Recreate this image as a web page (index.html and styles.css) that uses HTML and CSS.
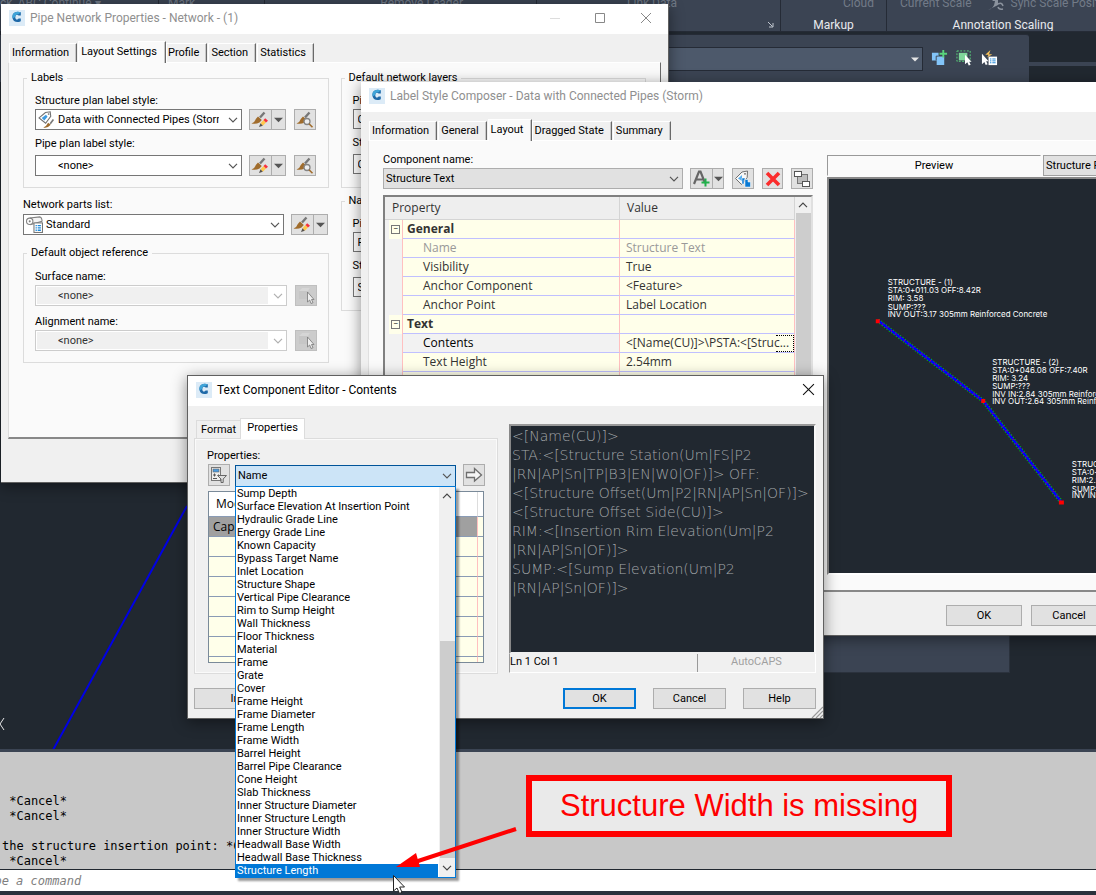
FILE: index.html
```html
<!DOCTYPE html>
<html lang="en">
<head>
<meta charset="utf-8">
<title>Text Component Editor - Contents</title>
<link rel="stylesheet" href="styles.css">
</head>
<body>
<svg class="defs" aria-hidden="true">
  <symbol id="i-logo" viewBox="0 0 16 16"><rect width="16" height="16" fill="#dcebf7"/><path d="M11.800 2.200V5.400H9.600Q7.600 4 6.400 5.800Q5.800 8 7.200 9.400Q8.800 10 9.600 8.600H11.800V11.200Q8 13 5 11Q2.600 8 3.800 4.600Q6 .6 11.800 2.200Z" fill="#1f69a8"/><path d="M11.800 2.200Q6 .6 3.800 4.600Q3.200 6.600 3.600 8.400L6.200 7Q6.200 4 9.600 4.200Z" fill="#3fa4d8"/></symbol>
  <symbol id="i-chev" viewBox="0 0 10 6"><path d="M1 .8 5 4.800 9 .8" fill="none" stroke="currentColor" stroke-width="1.200"/></symbol>
  <symbol id="i-tri" viewBox="0 0 10 6"><path d="M0 .5H10L5 5.500Z" fill="currentColor"/></symbol>
  <symbol id="i-brush" viewBox="0 0 18 18"><path d="M13.500 1.500 9 6.500" stroke="#777" stroke-width="2.400"/><path d="M7 5.500 10.800 9 8.500 11.500Q5 13.500.5 12.500Q4 11 4.800 8Z" fill="#a06c2c"/></symbol>
  <symbol id="i-edit" viewBox="0 0 18 18"><use href="#i-brush"/><path d="M9.500 12.200 12.500 9 15 11.500 11.800 14.700Z" fill="#ffc84c"/><path d="M12.500 9 14.200 7.200 17 9.700 15 11.500Z" fill="#f6303e"/><path d="M9.500 12.200 11.800 14.700 8 16Z" fill="#55514d"/></symbol>
  <symbol id="i-find" viewBox="0 0 18 18"><use href="#i-brush"/><circle cx="11" cy="10.500" r="3" fill="#eee" stroke="#858585" stroke-width="1.300"/><path d="M13 12.800 16.500 16.300" stroke="#a06c2c" stroke-width="1.600"/></symbol>
  <symbol id="i-tag" viewBox="0 0 16 16"><path d="M1 6.500 7 1.500 11.500.8 12 5 7.200 11.500Z" fill="#fff" stroke="#707070"/><path d="M3.500 6.500 7.500 3.500 9 5.500 6 9Z" fill="#3f9be0"/><circle cx="10" cy="2.800" r=".8" fill="#707070"/><path d="M14.500 8 11.500 12" stroke="#777" stroke-width="1.600"/><path d="M9.500 11 12 13Q9 16.500 5 15.500Q8 14.500 9.500 11Z" fill="#a06c2c"/></symbol>
  <symbol id="i-parts" viewBox="0 0 16 16"><path d="M3.500 1.800 13 .8Q15.500 2 15 5L4 8.200" fill="#f4f4f4" stroke="#808080"/><circle cx="3.500" cy="5" r="3" fill="#fff" stroke="#808080"/><circle cx="3.500" cy="5" r="1" fill="#808080"/><rect x="7.500" y="6.500" width="8" height="9" fill="#fff" stroke="#777"/><path d="M9 9H10.200M11 9H14M9 11.200H10.200M11 11.200H14M9 13.400H10.200M11 13.400H14" stroke="#1985d8" stroke-width="1.200"/></symbol>
  <symbol id="i-pick" viewBox="0 0 18 18"><path d="M2 4 5 1H13L11 4V12H2Z" fill="#c6c6c6"/><path d="M2 4 5 1H13L11 4Z" fill="#d6d6d6"/><path d="M10.500 5V15L12.700 13 14 16.500 16 15.700 14.500 12.500H17Z" fill="#eee" stroke="#777" stroke-width=".8"/></symbol>
  <symbol id="i-addtext" viewBox="0 0 18 18"><path d="M1 14 6 1.500H7.500L12 13M3 9.500H10" fill="none" stroke="#666" stroke-width="2.200"/><path d="M12.500 8.500V16.500M8.500 12.500H16.500" stroke="#21b04b" stroke-width="2"/></symbol>
  <symbol id="i-copytag" viewBox="0 0 18 18"><path d="M1.500 8.500 8 2 13.500 1 13.200 7.500 7.500 14.500Z" fill="#f7f7f7" stroke="#707070"/><path d="M4 8.500 8 5V11Z" fill="#58aff0"/><circle cx="11" cy="3.800" r=".9" fill="#666"/><path d="M8 8H11V10H10V14H8ZM11 9.500H14V12H16.500V17H11Z" fill="#0a7ad4" stroke="#fff" stroke-width=".5"/></symbol>
  <symbol id="i-del" viewBox="0 0 18 18"><path d="M3 3 15 15M15 3 3 15" stroke="#fb2c2c" stroke-width="3.600"/></symbol>
  <symbol id="i-order" viewBox="0 0 18 18"><rect x="4.500" y="4.500" width="10" height="9" fill="#bdbdbd" stroke="#777"/><rect x="1.500" y="1.500" width="7" height="5" fill="#fff" stroke="#555"/><rect x="9.500" y="11.500" width="7" height="5" fill="#fff" stroke="#555"/></symbol>
  <symbol id="i-filter" viewBox="0 0 18 18"><rect x="1.500" y="1.500" width="9" height="13" fill="#eee" stroke="#777"/><rect x="3" y="3" width="6" height="3" fill="#4b9ce0" stroke="#666" stroke-width=".6"/><path d="M3 9H6M4.500 7.500V10.500M3 12.500H7M8 9H9" stroke="#555"/><path d="M7.500 9.500H16.500L13.200 13V16.500H11V13Z" fill="#ddd" stroke="#666"/></symbol>
  <symbol id="i-arrow" viewBox="0 0 18 18"><path d="M1.500 6.500H9.500V2.500L16.500 9 9.500 15V11.500H1.500Z" fill="#f5f5f5" stroke="#6e6e6e" stroke-width="1.300"/></symbol>
  <symbol id="i-addsel" viewBox="0 0 18 18"><path d="M1 3H8V7H14V16H6V11H1Z" fill="#82c4f8"/><path d="M5.500 11V6.500H8" fill="none" stroke="#3b4453"/><path d="M13 0V8M9 4H17" stroke="#59d47c" stroke-width="2"/></symbol>
  <symbol id="i-selobj" viewBox="0 0 18 18"><rect x="3" y="3" width="9" height="8" fill="#7fd79a"/><path d="M1 1H15V12H1Z" fill="none" stroke="#59d47c" stroke-dasharray="2 1.500"/><path d="M9.500 5V15L12 13 13.500 16.500 15.500 15.700 14 12.500H16.500Z" fill="#fff"/></symbol>
  <symbol id="i-quick" viewBox="0 0 18 18"><path d="M1 4V15L3.600 12.800 5 16 7 15 5.500 12H8Z" fill="#fff"/><path d="M10 0 4.500 5H8L6.500 8 12 4.500H8.500Z" fill="#f7c25c"/><rect x="8" y="7" width="9" height="9" fill="#fff"/><path d="M9.500 9.500H11M12 9.500H15.500M9.500 11.500H11M12 11.500H15.500M9.500 13.500H11M12 13.500H15.500" stroke="#1985d8"/></symbol>
</svg>

<main class="desktop">
  <header class="ribbon">
    <div class="panel p1"><span class="cmd">ck, ABC Continue ▾</span></div>
    <div class="panel p2"><span class="cmd">Mark</span></div>
    <div class="panel p3"><span class="cmd">Remove Leader</span></div>
    <div class="panel p4"><span class="cmd">Link Data</span><svg class="launch" viewBox="0 0 6 6"><path d="M0 0 4.500 4.500M5 1V5H1" fill="none" stroke="#c0c6cf"/></svg></div>
    <div class="panel p5"><span class="cmd">Cloud</span><b>Markup</b></div>
    <div class="panel p6"><span class="cmd"><span>Current Scale</span><svg viewBox="0 0 16 16"><path d="M0 15Q6 14 7 6H4L10 1V10Z" fill="#8a929d"/><path d="M10 9Q14 7 15 11M15 14Q11 15 10 12" fill="none" stroke="#8a929d" stroke-width="1.500"/></svg><span>Sync Scale Positions</span></span><b>Annotation Scaling</b></div>
  </header>
  <div class="palette">
    <div class="palbox">
      <button class="palfield" aria-label="Object type"><svg class="tri"><use href="#i-tri"/></svg></button>
      <svg class="pi"><use href="#i-addsel"/></svg><svg class="pi"><use href="#i-selobj"/></svg><svg class="pi"><use href="#i-quick"/></svg>
    </div>
    <div class="rail"></div>
  </div>
  <div class="canvas">
    <svg class="drawing" viewBox="0 0 240 280"><path d="M187 37 53 281" stroke="#0000e6" stroke-width="2"/><path d="M-4 249 4 261M4 249-4 261" stroke="#e6e6e6"/></svg>
    <div class="strip"></div>
  </div>
  <section class="console">
    <pre>
 *Cancel*
 *Cancel*

the structure insertion point: *Cancel*
 *Cancel*</pre>
  </section>
  <div class="prompt"><input aria-label="Command line" placeholder="Type a command"></div>
  <div class="foot"></div>

  <section class="win w1">
    <div class="title"><svg class="logo"><use href="#i-logo"/></svg><h2>Pipe Network Properties - Network - (1)</h2>
      <svg class="sys" viewBox="0 0 104 12"><path d="M1 6.500H11" stroke="#ddd"/><path d="M46.500 1.500H55.500V10.500H46.500ZM92 1 102 11M102 1 92 11" fill="none" stroke="#888"/></svg></div>
    <nav class="tabs"><button>Information</button><button class="on">Layout Settings</button><button>Profile</button><button>Section</button><button>Statistics</button></nav>
    <div class="page cols">
      <div class="col">
        <fieldset><legend>Labels</legend>
          <label for="s1">Structure plan label style:</label>
          <div class="row"><span class="sel icon"><svg class="lead"><use href="#i-tag"/></svg><select id="s1"><option>Data with Connected Pipes (Storm)</option></select><svg class="chev"><use href="#i-chev"/></svg></span>
            <span class="split"><button aria-label="Edit style"><svg><use href="#i-edit"/></svg></button><button class="dd" aria-label="More"><svg><use href="#i-tri"/></svg></button></span><button class="ib" aria-label="Find"><svg><use href="#i-find"/></svg></button></div>
          <label for="s2" class="up">Pipe plan label style:</label>
          <div class="row"><span class="sel icon"><select id="s2"><option>&lt;none&gt;</option></select><svg class="chev"><use href="#i-chev"/></svg></span>
            <span class="split"><button aria-label="Edit style"><svg><use href="#i-edit"/></svg></button><button class="dd" aria-label="More"><svg><use href="#i-tri"/></svg></button></span><button class="ib" aria-label="Find"><svg><use href="#i-find"/></svg></button></div>
        </fieldset>
        <label for="s3" class="parts">Network parts list:</label>
        <div class="row"><span class="sel part"><svg class="lead"><use href="#i-parts"/></svg><select id="s3"><option>Standard</option></select><svg class="chev"><use href="#i-chev"/></svg></span>
          <span class="split"><button aria-label="Edit list"><svg><use href="#i-edit"/></svg></button><button class="dd" aria-label="More"><svg><use href="#i-tri"/></svg></button></span></div>
        <fieldset class="ref"><legend>Default object reference</legend>
          <label for="s4">Surface name:</label>
          <div class="row"><span class="sel icon off"><select id="s4" disabled><option>&lt;none&gt;</option></select><svg class="chev"><use href="#i-chev"/></svg></span><button class="ib off" disabled aria-label="Pick surface"><svg><use href="#i-pick"/></svg></button></div>
          <label for="s5" class="up">Alignment name:</label>
          <div class="row"><span class="sel icon off"><select id="s5" disabled><option>&lt;none&gt;</option></select><svg class="chev"><use href="#i-chev"/></svg></span><button class="ib off" disabled aria-label="Pick alignment"><svg><use href="#i-pick"/></svg></button></div>
        </fieldset>
      </div>
      <div class="col">
        <fieldset><legend>Default network layers</legend>
          <label for="l1">Pipe plan layer:</label><input id="l1" value="C-STRM-PIPE">
          <label for="l2" class="up">Structure plan layer:</label><input id="l2" value="C-STRM-STRC">
        </fieldset>
        <fieldset class="names"><legend>Name templates</legend>
          <label for="l3">Pipe name template:</label><input id="l3" value="Pipe - (1)">
          <label for="l4" class="up">Structure name template:</label><input id="l4" value="Structure - (1)">
        </fieldset>
      </div>
    </div>
  </section>

  <section class="win w2">
    <div class="title"><svg class="logo"><use href="#i-logo"/></svg><h2>Label Style Composer - Data with Connected Pipes (Storm)</h2></div>
    <nav class="tabs"><button>Information</button><button>General</button><button class="on">Layout</button><button>Dragged State</button><button>Summary</button></nav>
    <div class="page cols">
      <div class="compose">
        <label for="s6">Component name:</label>
        <div class="row"><span class="sel grey"><select id="s6"><option>Structure Text</option></select><svg class="chev"><use href="#i-chev"/></svg></span>
          <span class="split"><button aria-label="Add text"><svg><use href="#i-addtext"/></svg></button><button class="dd thin" aria-label="More"><svg><use href="#i-tri"/></svg></button></span>
          <button class="ib" aria-label="Copy component"><svg><use href="#i-copytag"/></svg></button><button class="ib" aria-label="Delete component"><svg><use href="#i-del"/></svg></button><button class="ib" aria-label="Draw order"><svg><use href="#i-order"/></svg></button></div>
        <div class="grid">
          <table>
            <colgroup><col class="c1"><col class="c2"><col></colgroup>
            <thead><tr><th colspan="2">Property</th><th>Value</th></tr></thead>
            <tbody>
              <tr class="grp"><td class="gut"><i>−</i></td><td>General</td><td></td></tr>
              <tr class="dim"><td class="gut"></td><td>Name</td><td>Structure Text</td></tr>
              <tr><td class="gut"></td><td>Visibility</td><td>True</td></tr>
              <tr><td class="gut"></td><td>Anchor Component</td><td>&lt;Feature&gt;</td></tr>
              <tr><td class="gut"></td><td>Anchor Point</td><td>Label Location</td></tr>
              <tr class="grp"><td class="gut"><i>−</i></td><td>Text</td><td></td></tr>
              <tr class="cur"><td class="gut"></td><td>Contents</td><td>&lt;[Name(CU)]&gt;\PSTA:&lt;[Struc...<button aria-label="Edit contents"></button></td></tr>
              <tr><td class="gut"></td><td>Text Height</td><td>2.54mm</td></tr>
              <tr><td class="gut"></td><td></td><td></td></tr>
            </tbody>
          </table>
          <div class="sbar"><svg><use href="#i-chev"/></svg><div></div></div>
        </div>
      </div>
      <div class="prev">
        <div class="ptabs"><button class="on">Preview</button><button>Structure Plan</button></div>
        <svg class="view" viewBox="1 1 420 396" preserveAspectRatio="xMinYMin slice">
          <g fill="none"><path d="M50 143 156 224 234 325" stroke="#0c0" stroke-width="4" stroke-dasharray="1.500 1.500"/><path d="M50 143 156 224 234 325" stroke="#00f" stroke-width="2.500"/><path d="M50 143 156 224 234 325" stroke="#d01030" stroke-dasharray="1.500 4"/></g>
          <path d="M48 142H52V146H48ZM154 222H158V226H154ZM232 324H237V328H232Z" fill="red"/>
          <text x="60" y="108">STRUCTURE - (1)</text><text x="60" y="116">STA:0+011.03 OFF:8.42R</text><text x="60" y="124">RIM: 3.58</text><text x="60" y="133">SUMP:???</text><text x="60" y="140">INV OUT:3.17 305mm Reinforced Concrete</text>
          <text x="165" y="188">STRUCTURE - (2)</text><text x="165" y="196">STA:0+046.08 OFF:7.40R</text><text x="165" y="204">RIM: 3.24</text><text x="165" y="212">SUMP:???</text><text x="165" y="220">INV IN:2.84 305mm Reinforced Concrete</text><text x="165" y="227">INV OUT:2.64 305mm Reinforced Concrete</text>
          <text x="245" y="290">STRUCTURE - (3)</text><text x="245" y="298">STA:0+082.25</text><text x="245" y="306">RIM:2.91</text><text x="245" y="315">SUMP:???</text><text x="245" y="322">INV IN:2.50</text>
        </svg>
      </div>
    </div>
    <div class="acts"><button>OK</button><button>Cancel</button></div>
  </section>

  <section class="win w3">
    <div class="title"><svg class="logo"><use href="#i-logo"/></svg><h2>Text Component Editor - Contents</h2><svg class="sys" viewBox="0 0 12 12"><path d="M1 1 11 11M11 1 1 11" stroke="#111" stroke-width="1"/></svg></div>
    <div class="body3">
      <div class="left3">
        <nav class="tabs flat"><button>Format</button><button class="on">Properties</button></nav>
        <div class="page3">
          <label for="s7">Properties:</label>
          <div class="row"><button class="ib" aria-label="Filter"><svg><use href="#i-filter"/></svg></button>
            <span class="sel open"><select id="s7"><option>Name</option></select><svg class="chev"><use href="#i-chev"/></svg>
              <span class="pop"><ul role="listbox" aria-label="Properties">
                <li>Sump Depth</li><li>Surface Elevation At Insertion Point</li><li>Hydraulic Grade Line</li><li>Energy Grade Line</li><li>Known Capacity</li><li>Bypass Target Name</li><li>Inlet Location</li><li>Structure Shape</li><li>Vertical Pipe Clearance</li><li>Rim to Sump Height</li><li>Wall Thickness</li><li>Floor Thickness</li><li>Material</li><li>Frame</li><li>Grate</li><li>Cover</li><li>Frame Height</li><li>Frame Diameter</li><li>Frame Length</li><li>Frame Width</li><li>Barrel Height</li><li>Barrel Pipe Clearance</li><li>Cone Height</li><li>Slab Thickness</li><li>Inner Structure Diameter</li><li>Inner Structure Length</li><li>Inner Structure Width</li><li>Headwall Base Width</li><li>Headwall Base Thickness</li><li class="hot">Structure Length</li></ul>
                <span class="psb"><svg class="u"><use href="#i-chev"/></svg><i></i><svg><use href="#i-chev"/></svg></span></span>
            </span>
            <button class="ib" aria-label="Insert property"><svg><use href="#i-arrow"/></svg></button></div>
          <table class="mods"><thead><tr><th>Modifier</th><th></th></tr></thead><tbody><tr class="hl"><td>Capitalization</td><td></td></tr><tr><td></td><td></td></tr><tr><td></td><td></td></tr><tr><td></td><td></td></tr><tr><td></td><td></td></tr><tr><td></td><td></td></tr><tr><td></td><td></td></tr><tr class="last"><td></td><td></td></tr></tbody></table>
        </div>
      </div>
      <div class="right3">
        <textarea aria-label="Contents" spellcheck="false">&lt;[Name(CU)]&gt;
STA:&lt;[Structure Station(Um|FS|P2
|RN|AP|Sn|TP|B3|EN|W0|OF)]&gt; OFF:
&lt;[Structure Offset(Um|P2|RN|AP|Sn|OF)]&gt;
&lt;[Structure Offset Side(CU)]&gt;
RIM:&lt;[Insertion Rim Elevation(Um|P2
|RN|AP|Sn|OF)]&gt;
SUMP:&lt;[Sump Elevation(Um|P2
|RN|AP|Sn|OF)]&gt;</textarea>
        <div class="status"><span>Ln 1 Col 1</span><span class="caps">AutoCAPS</span></div>
      </div>
    </div>
    <div class="acts3"><button class="ins">Insert...</button><button class="def">OK</button><button>Cancel</button><button>Help</button></div>
    <svg class="grip" viewBox="0 0 12 12"><path d="M1 12 12 1M5 12 12 5M9 12 12 9" stroke="#999" stroke-width="1.200"/></svg>
  </section>

  <aside class="note">Structure Width is missing</aside>
  <svg class="ptr" viewBox="0 0 130 71"><path d="M126 5 25 38" stroke="red" stroke-width="4"/><path d="M6 43 26 29 30 43Z" fill="red"/><path d="M3.500 51.500V67L7 64 9.500 69.500 12 68.300 9.700 63H14.500Z" fill="#fff" stroke="#222"/></svg>
</main>
</body>
</html>
```
FILE: styles.css
```css
* { box-sizing: border-box; }
body { margin: 0; font: 11px/16px Roboto, sans-serif; color: #000; }
button, input, select, textarea { font: inherit; color: inherit; border-radius: 0; margin: 0; }
button { padding: 0; border: 1px solid #adadad; background: #e1e1e1; }
h2 { margin: 0; font-size: 12px; font-weight: 400; }
label { display: block; }
.defs { position: absolute; width: 0; height: 0; }

.desktop { position: relative; overflow: hidden; display: flex; flex-direction: column; height: 100vh; background: #212830; }

.ribbon { display: flex; flex: none; height: 32px; background: #3b4453; border-bottom: 1px solid #252b36; overflow: hidden; font-size: 12px; color: #e8eaee; }
.panel { position: relative; flex: none; display: flex; flex-direction: column; align-items: center; justify-content: space-between; border-right: 1px solid #252b36; }
.panel b { font-weight: 400; line-height: 11px; }
.cmd { display: flex; gap: 7px; align-items: center; margin-top: -5px; color: #727b88; white-space: nowrap; }
.cmd svg { width: 16px; height: 16px; margin-left: 9px; }
.p1 { width: 159px; } .p2 { width: 106px; } .p3 { width: 272px; } .p4 { width: 244px; } .p5 { width: 106px; } .p6 { width: 233px; }
.p1 .cmd { align-self: flex-start; }
.p2 .cmd { align-self: flex-start; margin-left: 9px; }
.p3 .cmd { align-self: flex-end; margin-right: 73px; }
.p4 .cmd { align-self: flex-start; margin-left: 90px; }
.p5 .cmd { align-self: flex-end; margin-right: 12px; }
.p6 .cmd { align-self: flex-start; margin-left: 13px; }
.launch { position: absolute; right: 6px; bottom: 3px; width: 6px; height: 6px; }

.palette { display: flex; flex: none; height: 50px; }
.palbox { flex: none; display: flex; align-items: flex-start; justify-content: flex-end; gap: 8px; width: 1029px; margin-top: 2px; padding: 12px 31px 0 0; background: #3b4453; border-top: 1px solid #252b36; border-radius: 0 3px 0 0; }
.palfield { display: flex; align-items: center; justify-content: flex-end; width: 400px; height: 24px; padding-right: 3px; background: #4d596b; border: 1px solid #252b36; color: #e6e6e6; }
.tri { width: 8px; height: 5px; }
.pi { width: 17px; height: 17px; margin-top: 3px; }
.rail { flex: 1; align-self: flex-start; height: 34px; border-bottom: 4px solid #3b4453; }

.canvas { position: relative; flex: 1; border-bottom: 3px solid #3b4453; }
.drawing { position: absolute; left: 0; bottom: 0; width: 240px; height: 280px; }
.strip { position: absolute; left: 700px; width: 310px; bottom: 76px; height: 60px; background: #3b4453; border: 1px solid #2b323d; }

.console { flex: none; height: 118px; background: #c8c8c8; padding: 42px 0 0 2px; border-bottom: 1px solid #212830; }
.console pre { margin: 0; font: 12px/15px "DejaVu Sans Mono", monospace; }
.prompt { flex: none; height: 21px; overflow: hidden; background: #fff; }
.prompt input { display: block; width: 100%; height: 21px; margin-left: -20px; padding: 1px 0 0; border: 0; font: italic 12px/20px "DejaVu Sans Mono", monospace; }
.prompt input::placeholder { color: #808080; opacity: 1; }
.foot { flex: none; height: 4px; background: #2b323d; }

.win { position: absolute; background: #f0f0f0; box-shadow: 0 3px 14px rgba(0,0,0,.45); border: 1px solid #606060; border-width: 0 1px 1px 0; }
.title { display: flex; align-items: center; height: 30px; padding: 0 0 3px 8px; background: #fff; color: #8f8f8f; }
.title h2 { flex: 1; margin-left: 5px; }
.logo { width: 16px; height: 16px; }
.tabs { display: flex; align-items: flex-end; height: 28px; }
.tabs button { height: 19px; padding: 0 7px 1px 2px; margin-right: 1px; border: 1px solid #fff; border-right: 1px solid #696969; border-bottom: 0; background: #f0f0f0; box-shadow: inset -1px 0 #c8c8c8; }
.tabs button.on { height: 22px; padding: 0 8px 1px 2px; margin: 0 0 -1px 0; background: #fafafa; position: relative; }
.tabs .on + button { padding-left: 1px; }
.page { background: #fafafa; border-top: 1px solid #fff; border-left: 1px solid #dcdcdc; border-right: 1px solid #696969; border-bottom: 2px solid #888; }
.cols { display: flex; }
.row { display: flex; }
fieldset { margin: 0; padding: 0 11px; border: 1px solid #dcdcdc; min-width: 0; }
legend { padding: 0 4px; margin-left: -8px; line-height: 16px; height: 16px; }

.sel { position: relative; display: block; flex: 1; min-width: 0; }
.sel select { display: block; width: 100%; height: 21px; padding: 0 22px 0 2px; appearance: none; background: #fff; border: 1px solid #767676; opacity: 1; color: #000; overflow: hidden; }
.sel.icon select { padding-left: 22px; }
.sel.part select { padding-left: 22px; }
.sel.off select { background: #f0f0f0; border-color: #ccc; box-shadow: inset 0 0 0 1px #fff, inset -18px 0 #fff; color: #333; }
.sel.grey select { background: #e1e1e1; border-color: #adadad; }
.chev { position: absolute; right: 4px; top: 8px; width: 10px; height: 6px; color: #555; pointer-events: none; }
.off .chev { color: #b0b0b0; }
.lead { position: absolute; left: 3px; top: 2px; width: 17px; height: 17px; pointer-events: none; }
.split { display: flex; margin-left: 7px; }
.split button, .ib { display: grid; place-items: center; width: 23px; height: 21px; }
.split .dd { width: 15px; margin-left: -1px; color: #555; }
.split .dd.thin { width: 12px; }
.split svg, .ib svg { width: 18px; height: 18px; }
.split .dd svg { width: 9px; height: 6px; }
.ib { width: 22px; margin-left: 8px; }
.ib.off { background: #ccc; border-color: #bfbfbf; }

.w1 { left: 1px; top: 4px; width: 668px; }
.w1 .title { padding-right: 15px; }
.sys { width: 104px; height: 12px; }
.w1 .page { margin: 0 7px 43px; height: 377px; padding: 7px 14px; gap: 12px; align-items: flex-start; }
.w1 .row { margin-right: 1px; }
.w1 .ref .row { margin-right: 0; }
.w1 .tabs, .w2 .tabs { padding-left: 8px; }
.col { flex: 1; }
.w1 fieldset { height: 118px; padding-top: 6px; }
.w1 fieldset label { line-height: 17px; }
.w1 fieldset .up { margin: 5px 0 3px; }
.parts { margin-top: 8px; line-height: 18px; }
.w1 .ref { margin-top: 10px; }
.w1 .ref label { padding-top: 1px; }
.w1 .ref .up { margin: 6px 0 0; }
.col input { display: block; width: 100%; height: 20px; padding: 0 4px; background: #fff; border: 1px solid #767676; }
.w1 .names { margin-top: 5px; }

.w2 { left: 361px; top: 82px; width: 890px; }
.w2 .page { margin-left: 7px; padding: 10px 14px 15px; gap: 14px; align-items: flex-start; border-left-color: #e0e0e0; }
.compose { flex: none; width: 430px; }
.compose label { line-height: 17px; }
.compose .sel { flex: 0 0 300px; }
.grid { display: flex; margin-top: 6px; height: 380px; border: 2px solid #808080; border-color: #808080 #e0e0e0 #e0e0e0 #808080; background: #f4f4f4; }
.grid table { flex: 1; table-layout: fixed; width: 410px; height: 0; border-collapse: separate; border-spacing: 0; font: 12px/18px "Open Sans", sans-serif; color: #333; }
.c1 { width: 18px; }
.c2 { width: 217px; }
.grid th { height: 23px; padding: 0 0 0 7px; text-align: left; font-weight: 400; background: #eee; border-right: 1px solid #d4d4d4; border-bottom: 1px solid #d4d4d4; }
.grid td { height: 19px; padding: 0 0 0 6px; background: #ffffea; border-bottom: 1px solid #c0c0ff; border-right: 1px solid #ffc0c0; white-space: nowrap; line-height: 18px; }
.grid td.gut { padding: 0 0 0 6px; background: #f2f2f2; border-bottom: 0; }
.grid .grp .gut { background: linear-gradient(90deg, #f2f2f2 4px, #ffffea 4px); }
.gut i { display: block; width: 9px; height: 9px; border: 1px solid #777; font: 9px/7px Roboto, sans-serif; text-align: center; }
.grid td:nth-child(2) { padding-left: 20px; }
.grid .grp td:nth-child(2) { padding-left: 4px; font-weight: 700; }
.grid .dim td { color: #999; }
.grid .cur td:nth-child(2) { background: #f2f2f2; color: #000; }
.grid .cur td:last-child { position: relative; }
.cur button { position: absolute; right: 0; top: 1px; width: 18px; height: 17px; background: none; border: 1px dotted #000; border-left: 0; }
.sbar { width: 16px; background: #f0f0f0; text-align: center; }
.sbar svg { width: 10px; height: 6px; margin-top: 5px; transform: scaleY(-1); color: #444; }
.sbar div { height: 300px; margin-left: 1px; background: #cdcdcd; }
.prev { flex: 1; padding-top: 4px; margin-right: -14px; }
.ptabs { display: flex; gap: 2px; }
.ptabs button { width: 110px; height: 21px; border-color: #a0a0a0; }
.ptabs .on { width: 214px; background: #fafafa; border-color: #999 #fafafa #fafafa #999; }
.ptabs button:last-child { text-align: left; padding-left: 2px; }
.view { display: block; width: 100%; height: 398px; margin-top: 1px; background: #212830; border: 2px solid #777; border-color: #888 #fff #fff #888; font: 8px Inter, sans-serif; }
.view text { fill: #fff; }
.acts { display: flex; gap: 9px; padding: 13px 0 9px 585px; }
.acts button { width: 76px; height: 21px; }

.w3 { left: 187px; top: 375px; width: 637px; border-width: 1px; }
.w3 .title { color: #000; padding-right: 8px; }
.w3 .sys { width: 13px; height: 13px; }
.body3 { display: flex; gap: 11px; padding: 11px 7px 0 6px; align-items: flex-start; }
.left3 { flex: none; width: 304px; }
.tabs.flat { height: 21px; padding-left: 2px; }
.tabs.flat button { height: 18px; margin: 0; padding: 0 4px; border: 1px solid #dcdcdc; border-width: 1px 0 0 1px; box-shadow: none; }
.tabs.flat .on { height: 21px; padding: 0 6px 2px; margin-bottom: -1px; background: #fff; border-right-width: 1px; }
.page3 { padding: 9px 12px 11px; border: 1px solid #dcdcdc; box-shadow: inset 0 0 0 1px #fafafa; height: 236px; }
.page3 .ib { flex: none; margin: 0; width: 22px; height: 22px; }
.page3 .ib:first-child { margin-left: 1px; }
.sel.open { margin: 1px 7px 0 5px; }
.sel.open select { height: 22px; background: #cce4f7; border-color: #005499; }
.pop { position: absolute; z-index: 3; left: 0; top: 21px; width: 221px; display: flex; background: #fff; border: 1px solid #0078d7; box-shadow: 3px 3px 2px rgba(0,0,0,.4); }
.pop ul { flex: 1; margin: 0; padding: 0; list-style: none; line-height: 13px; white-space: nowrap; }
.pop li { padding-left: 1px; }
.pop .hot { background: #0078d7; color: #fff; }
.psb { display: flex; flex-direction: column; align-items: center; width: 16px; margin-left: 1px; padding: 6px 0; background: #f0f0f0; color: #444; }
.psb svg { width: 10px; height: 6px; }
.psb .u { transform: scaleY(-1); }
.psb i { width: 15px; height: 217px; margin: auto 0 7px; background: #cdcdcd; }
.mods { width: 276px; margin: 4px 0 0 1px; border: 1px solid #7a8a99; border-spacing: 0; background: #ffffea; font: 12px/18px "Open Sans", sans-serif; table-layout: fixed; }
.mods th, .mods td { height: 20px; padding: 0 0 0 4px; text-align: left; font-weight: 400; border-bottom: 1px solid #8a9bb5; border-right: 1px solid #ffc0c0; overflow: hidden; white-space: nowrap; }
.mods th { height: 25px; padding-left: 7px; background: #fff; border-right-color: #ddd; }
.mods th:last-child { width: 5px; padding: 0; }
.mods td:last-child { padding: 0; }
.mods tr > :last-child { border-right: 0; }
.mods .hl td:first-child { background: #a0a0a0; }
.mods .last td { height: 5px; line-height: 0; border-bottom: 0; }
.right3 { flex: 1; padding-top: 7px; }
textarea { display: block; width: 100%; height: 230px; padding: 1px; resize: none; overflow: hidden; white-space: pre; background: #212830; border: 2px solid #999; border-color: #999 #f8f8f8 #f0f0f0 #888; font: 300 14px/19px "DejaVu Sans Light", "DejaVu Sans", sans-serif; color: #a3a7aa; }
.status { display: flex; height: 19px; border: 1px solid #fff; border-width: 0 1px 1px 0; border-left: 1px solid #999; line-height: 15px; }
.status span { flex: 1; }
.status .caps { flex: 0 0 118px; border-left: 1px solid #999; text-align: center; color: #a0a0a0; }
.acts3 { display: flex; gap: 17px; padding: 14px 7px 9px 6px; }
.acts3 button { width: 73px; height: 21px; }
.acts3 .ins { width: 110px; margin-right: auto; }
.acts3 .def { border: 2px solid #0078d7; }
.grip { position: absolute; right: 0; bottom: 0; width: 12px; height: 12px; }

.note { position: absolute; left: 526px; top: 775px; padding: 0 28px; border: 6px solid red; background: #eaeaea; color: red; font: 31px/50px "Liberation Sans", Arial, sans-serif; white-space: nowrap; }
.ptr { position: absolute; z-index: 4; left: 390px; top: 824px; width: 130px; height: 71px; pointer-events: none; }
```
